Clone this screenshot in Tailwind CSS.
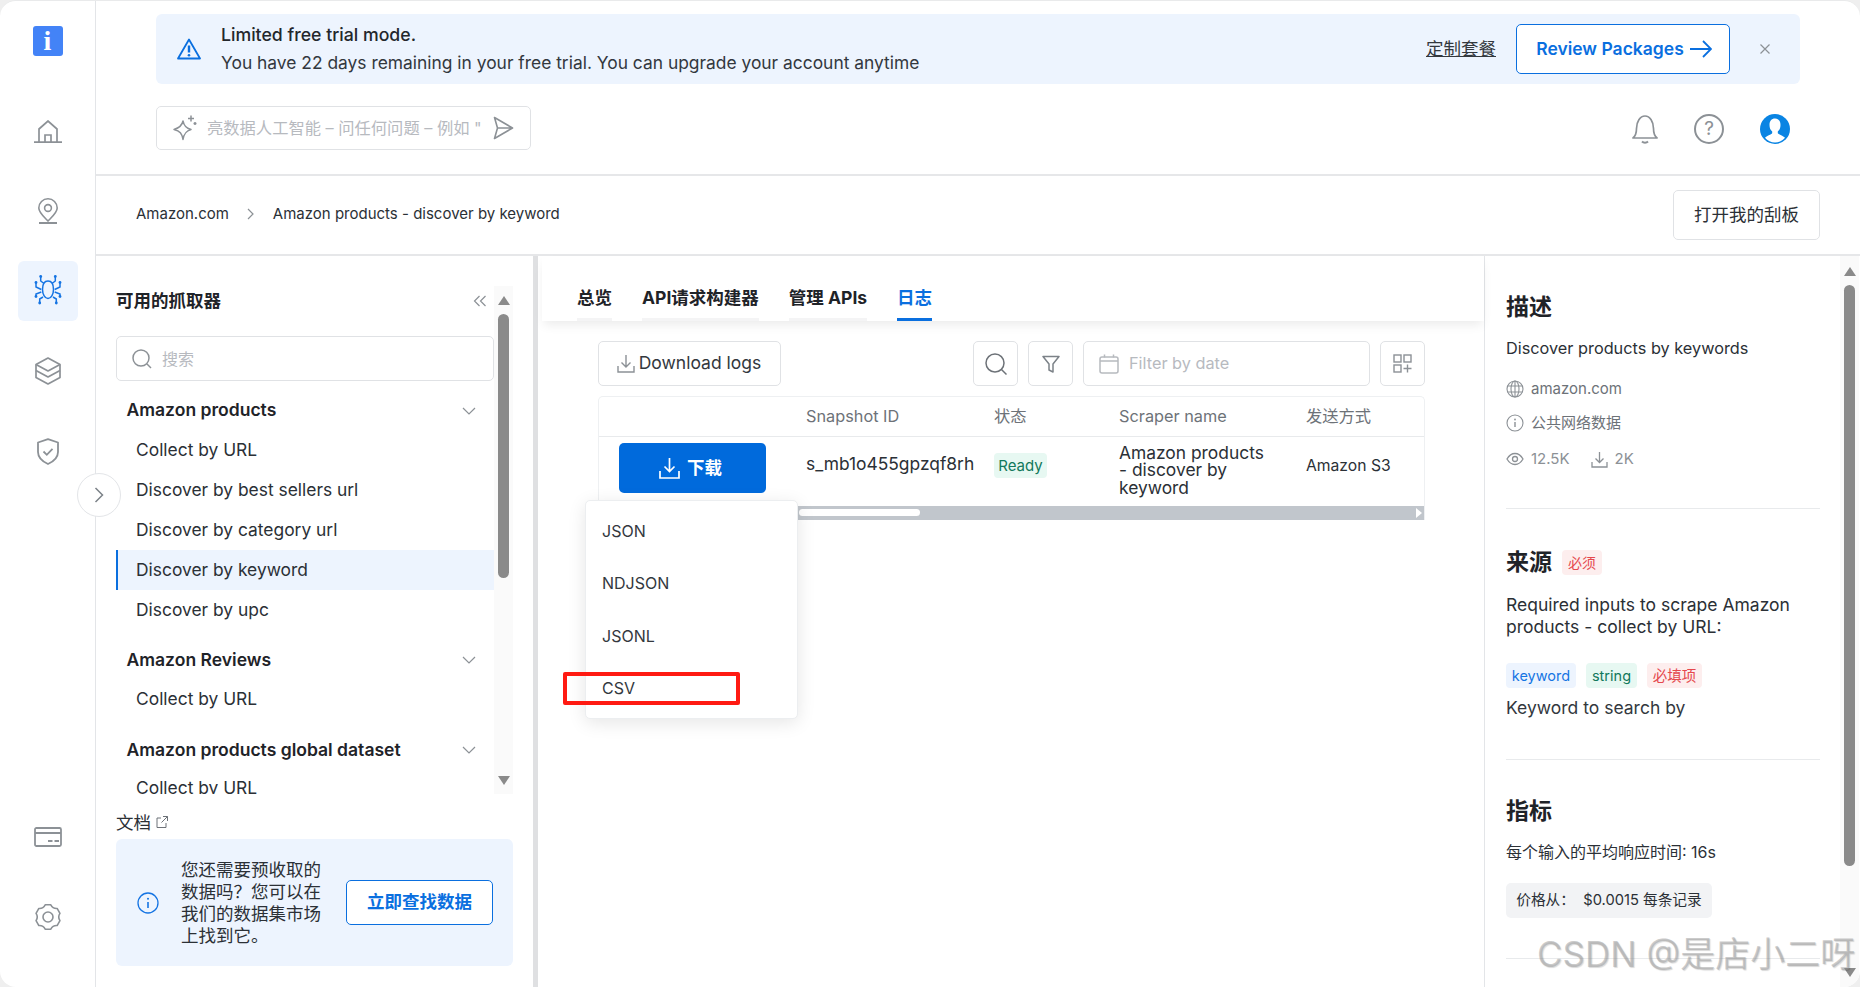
<!DOCTYPE html>
<html lang="zh">
<head>
<meta charset="utf-8">
<script src="https://cdn.jsdelivr.net/npm/@tailwindcss/browser@4"></script>
<title>Logs</title>
</head>
<body class="m-0 bg-[#efefef]">
<div class="relative flex h-[987px] w-[1860px] overflow-hidden rounded-[16px] border-t border-[#e9eaeb] bg-white font-['Inter','Noto_Sans_CJK_SC',sans-serif] text-[#23272c]">

  <!-- Rail -->
  <aside class="flex h-full w-[96px] shrink-0 flex-col items-center border-r border-[#e3e5e8] pt-[25px] text-[#8c9196]">
    <div class="flex h-[30px] w-[30px] items-center justify-center rounded-[3px] bg-[#4383f7] font-['Liberation_Serif',serif] text-[28px] font-bold leading-none text-white">i</div>
    <nav class="mt-[45px] flex flex-col gap-5">
      <div class="flex h-[60px] w-[60px] items-center justify-center">
        <svg width="28" height="23" viewBox="0 0 28 23" fill="none" stroke="currentColor" stroke-width="1.700"><path d="M5 22V9L14 1l9 8v13"/><path d="M11 22v-7h6v7"/><path d="M0 22.200h28"/></svg>
      </div>
      <div class="flex h-[60px] w-[60px] items-center justify-center">
        <svg width="20" height="26" viewBox="0 0 20 26" fill="none" stroke="currentColor" stroke-width="1.600"><path d="M10 23C5 18 .8 14.500.8 10a9.200 9.200 0 0 1 18.400 0c0 4.500-4.200 8-9.200 13Z"/><circle cx="10" cy="10" r="3.400"/><path d="M1 25h18" stroke-width="2"/></svg>
      </div>
      <div class="flex h-[60px] w-[60px] items-center justify-center rounded-[6px] bg-[#edf4fe] text-[#1574e3]">
        <svg width="30" height="32" viewBox="0 0 30 32" fill="none" stroke="currentColor" stroke-width="1.500">
          <path d="M15 6c-3.500 0-5.500 3.500-5.500 8.500S12 23.500 15 23.500s5.500-4 5.500-9S18.500 6 15 6Z"/>
          <path d="M7.700 1.500V6L11 8.500M22.300 1.500V6L19 8.500M3 7.500V12l5.300 2.500M27 7.500V12l-5.300 2.500M3 21.500V19l5.300-2M27 21.500V19l-5.300-2M6.700 28v-4l3.300-2M23.300 28v-4l-3.300-2"/>
          <g fill="currentColor" stroke="none"><circle cx="7.700" cy="1.500" r="1.400"/><circle cx="22.300" cy="1.500" r="1.400"/><circle cx="3" cy="7.500" r="1.400"/><circle cx="27" cy="7.500" r="1.400"/><circle cx="3" cy="21.500" r="1.400"/><circle cx="27" cy="21.500" r="1.400"/><circle cx="6.700" cy="28" r="1.400"/><circle cx="23.300" cy="28" r="1.400"/></g>
        </svg>
      </div>
      <div class="flex h-[60px] w-[60px] items-center justify-center">
        <svg width="26" height="28" viewBox="0 0 26 28" fill="none" stroke="currentColor" stroke-width="1.700" stroke-linejoin="round"><path d="M13 1 25 7.500v13L13 27 1 20.500v-13Z"/><path d="M1 7.500 13 14 25 7.500"/><path d="M1 13.500 13 20l12-6.500"/></svg>
      </div>
      <div class="flex h-[60px] w-[60px] items-center justify-center">
        <svg width="22" height="27" viewBox="0 0 22 27" fill="none" stroke="currentColor" stroke-width="1.800"><path d="M11 1.200 21 4.500V14c0 5.500-4.500 9.500-10 12C5.500 23.500 1 19.500 1 14V4.500Z" stroke-linejoin="round"/><path d="m6.500 13.500 3.300 3.300 5.700-6"/></svg>
      </div>
    </nav>
    <div class="mt-auto mb-[40px] flex flex-col gap-5">
      <div class="flex h-[60px] w-[60px] items-center justify-center">
        <svg width="28" height="20" viewBox="0 0 28 20" fill="none" stroke="currentColor" stroke-width="1.800"><rect x="1" y="1" width="26" height="18" rx="1.500"/><path d="M1 6h26"/><path d="M14 14h4.500M20.500 14H25" stroke-width="2"/></svg>
      </div>
      <div class="flex h-[60px] w-[60px] items-center justify-center">
        <svg width="26" height="26" viewBox="0 0 26 26" fill="none" stroke="currentColor" stroke-width="1.600" stroke-linejoin="round"><path d="M10.190.82 15.810.82Q17.750 4.770 22.140 4.470L24.950 9.350Q22.500 13 24.950 16.650L22.140 21.530Q17.750 21.230 15.810 25.180L10.190 25.180Q8.250 21.230 3.860 21.530L1.050 16.650Q3.500 13 1.050 9.350L3.860 4.470Q8.250 4.770 10.190.82Z"/><circle cx="13" cy="13" r="5"/></svg>
      </div>
    </div>
  </aside>

  <!-- Toggle -->
  <button class="absolute left-[77px] top-[472px] flex h-[44px] w-[44px] items-center justify-center rounded-full border border-[#e3e5e8] bg-white text-[#7c8288]">
    <svg width="10" height="16" viewBox="0 0 10 16" fill="none" stroke="currentColor" stroke-width="1.500"><path d="m1.500 1 7 7-7 7"/></svg>
  </button>

  <div class="flex min-w-0 flex-1 flex-col">
    <!-- Header -->
    <header class="h-[175px] shrink-0 border-b-2 border-[#e6e7e9] pl-[60px] pt-[13px]">
      <div class="flex h-[70px] w-[1644px] items-center rounded-[6px] bg-[#edf4fe] pl-[21px] pr-[29px]">
        <svg width="24" height="22" viewBox="0 0 24 22" fill="none" stroke="#0a6fdf" stroke-width="1.800"><path d="M12 1.500 23 20.500H1Z" stroke-linejoin="round"/><path d="M12 7.500v7" stroke-width="2.400"/><circle cx="12" cy="17.300" r="1.300" fill="#0a6fdf" stroke="none"/></svg>
        <div class="ml-[20px] flex-1">
          <p class="text-[17.700px] font-medium leading-[28px] text-[#23272c]">Limited free trial mode.</p>
          <p class="text-[17.400px] leading-[28px] text-[#33383e]">You have 22 days remaining in your free trial. You can upgrade your account anytime</p>
        </div>
        <a class="text-[17.500px] text-[#33383e] underline">定制套餐</a>
        <button class="ml-[20px] flex h-[50px] w-[214px] shrink-0 items-center justify-center gap-[6px] rounded-[5px] border border-[#0a6fdf] bg-white pl-[2px] text-[17.500px] font-semibold text-[#0a6fdf]">Review Packages
          <svg width="22" height="20" viewBox="0 0 22 20" fill="none" stroke="currentColor" stroke-width="1.800"><path d="M0 10h21M13 2l8 8-8 8"/></svg>
        </button>
        <svg class="ml-[29px] shrink-0" width="12" height="12" viewBox="0 0 12 12" fill="none" stroke="#8c9196" stroke-width="1.200"><path d="m1.500 1.500 9 9M10.500 1.500l-9 9"/></svg>
      </div>
      <div class="mt-[22px] flex items-center justify-between pr-[70px]">
        <div class="flex h-[44px] w-[375px] items-center rounded-[5px] border border-[#e0e2e5] pl-[16px]">
          <svg width="24" height="26" viewBox="0 0 24 26" fill="none" stroke="#8c9196" stroke-width="1.500"><path d="M10 6c1 5 3 7 8 8.500-5 1.500-7 4-8 10-1-6-3-8.500-9-10C6 13 9 11 10 6Z" stroke-linejoin="round"/><path d="M18 0.500v6M15 3.500h6M22 7v3M20.500 8.500h3"/></svg>
          <span class="ml-[10px] text-[16.300px] text-[#b7babf]">亮数据人工智能 – 问任何问题 – 例如 "</span>
          <svg class="ml-[11px]" width="21" height="24" viewBox="0 0 21 24" fill="none" stroke="#8c9196" stroke-width="1.600"><path d="M1.500 1.500 19.500 12 1.500 22.500 4.500 12ZM4.500 12h15" stroke-linejoin="round"/></svg>
        </div>
        <div class="mt-[1px] flex items-center">
          <svg width="26" height="30" viewBox="0 0 26 30" fill="none" stroke="#8c9196" stroke-width="1.700"><path d="M1 24c3-2.500 3.500-5 3.500-9.500C4.500 8 8 2 13 2s8.500 6 8.500 12.500c0 4.500.5 7 3.500 9.500Z" stroke-linejoin="round"/><path d="M10 27.500c1.500 1.500 4.500 1.500 6 0" stroke-width="2"/></svg>
          <div class="ml-[36px] flex h-[30px] w-[30px] items-center justify-center rounded-full border-2 border-[#8c9196] text-[19px] leading-none text-[#8c9196]">?</div>
          <div class="ml-[36px] h-[30px] w-[30px] rounded-full bg-[#0984e3]">
            <svg width="30" height="30" viewBox="0 0 30 30"><path d="M15 4.500c3.500 0 5.500 2.500 5.500 6.500 0 3-1 5.200-2.700 6.500v1.500c0 1.200 5 2.300 7.200 4.800a13 13 0 0 1-20 0c2.200-2.500 7.200-3.600 7.200-4.800v-1.500C10.500 16.200 9.500 14 9.500 11c0-4 2-6.500 5.500-6.500Z" fill="#fff"/></svg>
          </div>
        </div>
      </div>
    </header>

    <!-- Breadcrumb -->
    <div class="flex h-[80px] shrink-0 items-center border-b-2 border-[#e6e7e9] pl-[40px] pr-[40px]">
      <span class="-mt-[2px] text-[15px] text-[#2b3036]">Amazon.com</span>
      <svg class="ml-[18px] -mt-[2px]" width="8" height="12" viewBox="0 0 8 12" fill="none" stroke="#8c9196" stroke-width="1.200"><path d="m1 1 5 5-5 5"/></svg>
      <span class="-mt-[2px] ml-[18px] text-[15px] text-[#2b3036]">Amazon products - discover by keyword</span>
      <button class="ml-auto h-[50px] w-[147px] rounded-[5px] border border-[#e0e2e5] text-[17.500px] text-[#2b3036]">打开我的刮板</button>
    </div>

    <div class="flex min-h-0 flex-1">
      <!-- Sidebar -->
      <section class="h-full w-[437px] shrink-0 pl-[20px] pt-[30px]">
        <div class="flex h-[508px] w-[397px]">
          <div class="h-full w-[378px] overflow-hidden">
            <div class="flex h-[30px] items-center justify-between pr-[7px]">
              <h2 class="text-[17.500px] font-bold text-[#1f2328]">可用的抓取器</h2>
              <svg width="14" height="12" viewBox="0 0 14 12" fill="none" stroke="#8c9196" stroke-width="1.200"><path d="M6.500 1 1.500 6l5 5M12.500 1l-5 5 5 5"/></svg>
            </div>
            <div class="mt-[20px] flex h-[45px] items-center rounded-[5px] border border-[#e0e2e5] pl-[15px]">
              <svg width="20" height="20" viewBox="0 0 20 20" fill="none" stroke="#8c9196" stroke-width="1.500"><circle cx="9" cy="9" r="8"/><path d="m15 15 4 4"/></svg>
              <span class="ml-[10px] text-[16px] text-[#b7babf]">搜索</span>
            </div>
            <div class="mt-[10px] flex h-[39px] items-center justify-between pl-[10.500px] pr-[18px] text-[17.550px] font-semibold text-[#1f2328]">Amazon products
              <svg width="14" height="8" viewBox="0 0 14 8" fill="none" stroke="#8c9196" stroke-width="1.200"><path d="m1 1 6 6 6-6"/></svg>
            </div>
            <ul class="text-[17.400px] text-[#2b3036]">
              <li class="flex h-[40.100px] items-center pl-[20px]">Collect by URL</li>
              <li class="flex h-[40.100px] items-center pl-[20px]">Discover by best sellers url</li>
              <li class="flex h-[40.100px] items-center pl-[20px]">Discover by category url</li>
              <li class="flex h-[40.100px] items-center border-l-2 border-[#0a6fdf] bg-[#edf4fe] pl-[18px]">Discover by keyword</li>
              <li class="flex h-[40.100px] items-center pl-[20px]">Discover by upc</li>
            </ul>
            <div class="mt-[10px] flex h-[40px] items-center justify-between pl-[10.500px] pr-[18px] text-[17.550px] font-semibold text-[#1f2328]">Amazon Reviews
              <svg width="14" height="8" viewBox="0 0 14 8" fill="none" stroke="#8c9196" stroke-width="1.200"><path d="m1 1 6 6 6-6"/></svg>
            </div>
            <div class="flex h-[38px] items-center pl-[20px] text-[17.400px] text-[#2b3036]">Collect by URL</div>
            <div class="mt-[12px] flex h-[40px] items-center justify-between pl-[10.500px] pr-[18px] text-[17.550px] font-semibold text-[#1f2328]">Amazon products global dataset
              <svg width="14" height="8" viewBox="0 0 14 8" fill="none" stroke="#8c9196" stroke-width="1.200"><path d="m1 1 6 6 6-6"/></svg>
            </div>
            <div class="flex h-[36px] items-center pl-[20px] text-[17.400px] text-[#2b3036]">Collect by URL</div>
          </div>
          <div class="flex h-full w-[19px] flex-col items-center bg-[#fafafa]">
            <svg class="mt-[10px] shrink-0" width="12" height="9" viewBox="0 0 12 9"><path d="M6 0l6 9H0Z" fill="#8a8a8a"/></svg>
            <div class="mt-[9px] h-[264px] w-[11px] rounded-full bg-[#8a8a8a]"></div>
            <svg class="mt-auto mb-[9px] shrink-0" width="12" height="9" viewBox="0 0 12 9"><path d="M6 9 12 0H0Z" fill="#8a8a8a"/></svg>
          </div>
        </div>
        <div class="mt-[17px] flex h-[24px] items-center text-[17.500px] text-[#2b3036]">文档
          <svg class="ml-[5px] -mt-[2px]" width="12" height="12" viewBox="0 0 12 12" fill="none" stroke="#6d7278" stroke-width="1"><path d="M5 2H1v9.500h9V7M7 .5h4.500V5M11.500.5 5.500 6.500"/></svg>
        </div>
        <div class="mt-[4px] flex h-[127px] w-[397px] items-center rounded-[6px] bg-[#edf4fe] pl-[21px]">
          <svg class="shrink-0" width="22" height="22" viewBox="0 0 22 22" fill="none" stroke="#1574e3" stroke-width="1.300"><circle cx="11" cy="11" r="10"/><path d="M11 10v6" stroke-width="1.600"/><circle cx="11" cy="6.800" r="1" fill="#1574e3" stroke="none"/></svg>
          <p class="ml-[22px] w-[144px] shrink-0 text-[17.500px] leading-[22px] text-[#2b3036]">您还需要预收取的数据吗？您可以在我们的数据集市场上找到它。</p>
          <button class="ml-[21px] h-[45px] w-[147px] shrink-0 rounded-[5px] border border-[#0a6fdf] bg-white text-[17.500px] font-bold text-[#0a6fdf]">立即查找数据</button>
        </div>
      </section>

      <div class="h-full w-[5px] shrink-0 bg-[#dfe0e2]"></div>

      <!-- Main content -->
      <main class="relative h-full w-[947px] shrink-0 border-r border-[#e3e5e8]">
        <div class="ml-[4px] flex h-[65px] items-end gap-[30px] pl-[35px] shadow-[0_6px_10px_-2px_rgba(0,0,0,0.08)]">
          <div class="flex h-[65px] items-center border-b-[3px] border-[#f4f4f5] pt-[23px] text-[17.500px] font-bold text-[#1f2328]">总览</div>
          <div class="flex h-[65px] items-center border-b-[3px] border-[#f4f4f5] pt-[23px] text-[17.500px] font-bold text-[#1f2328]">API请求构建器</div>
          <div class="flex h-[65px] items-center border-b-[3px] border-[#f4f4f5] pt-[23px] text-[17.500px] font-bold text-[#1f2328]">管理 APIs</div>
          <div class="flex h-[65px] items-center border-b-[3px] border-[#0a6fdf] pt-[23px] text-[17.500px] font-bold text-[#0a6fdf]">日志</div>
        </div>
        <div class="mt-[20px] ml-[60px] flex h-[45px] w-[827px] items-stretch">
          <button class="flex w-[183px] items-center justify-center gap-[4px] rounded-[5px] border border-[#e0e2e5] pr-[1px] text-[17.500px] text-[#33383e]">
            <svg width="18" height="19" viewBox="0 0 18 19" fill="none" stroke="#8c9196" stroke-width="1.400"><path d="M9 1v12M4.500 8.500 9 13l4.500-4.500M1 12v6h16v-6"/></svg>Download logs</button>
          <button class="ml-auto flex w-[45px] items-center justify-center rounded-[5px] border border-[#e0e2e5]">
            <svg width="22" height="22" viewBox="0 0 22 22" fill="none" stroke="#6d7278" stroke-width="1.500"><circle cx="10" cy="10" r="9"/><path d="m16.500 16.500 5 5"/></svg>
          </button>
          <button class="ml-[10px] flex w-[45px] items-center justify-center rounded-[5px] border border-[#e0e2e5]">
            <svg width="18" height="18" viewBox="0 0 18 18" fill="none" stroke="#7c8288" stroke-width="1.500"><path d="M1 1.500h16L11 9v8l-4-2V9Z" stroke-linejoin="round"/></svg>
          </button>
          <div class="ml-[10px] flex w-[287px] items-center rounded-[5px] border border-[#e0e2e5] pl-[15px]">
            <svg width="20" height="20" viewBox="0 0 20 20" fill="none" stroke="#b7babf" stroke-width="1.500"><rect x="1" y="3" width="18" height="16" rx="2"/><path d="M1 7h18M5.500 0.500v3M14.500 0.500v3"/></svg>
            <span class="ml-[10px] text-[16.300px] text-[#b7babf]">Filter by date</span>
          </div>
          <button class="ml-[10px] flex w-[45px] items-center justify-center rounded-[5px] border border-[#e0e2e5]">
            <svg width="19" height="19" viewBox="0 0 19 19" fill="none" stroke="#8c9196" stroke-width="1.400"><rect x="1" y="1" width="7" height="7"/><rect x="11" y="1" width="7" height="7"/><rect x="1" y="11" width="7" height="7"/><path d="M14.500 10.500v8M10.500 14.500h8"/></svg>
          </button>
        </div>
        <div class="relative ml-[60px] mt-[10px] w-[827px] rounded-t-[5px] border-x border-t border-[#eef0f2]">
          <div class="grid h-[40px] grid-cols-[207px_188px_125px_187px_1fr] items-center border-b border-[#e8eaec] text-[16.300px] text-[#6d7278]">
            <div></div><div>Snapshot ID</div><div>状态</div><div>Scraper name</div><div>发送方式</div>
          </div>
          <div class="grid h-[69px] grid-cols-[207px_188px_125px_187px_1fr] items-center text-[16px] text-[#2b3036]">
            <div class="h-full pl-[20px] pt-[6px]">
              <button class="flex h-[50px] w-[147px] items-center justify-center gap-[7px] rounded-[5px] bg-[#006adc] text-[17.500px] font-bold text-white">
                <svg class="-ml-[4px]" width="21" height="22" viewBox="0 0 21 22" fill="none" stroke="#fff" stroke-width="1.700"><path d="M10.500 1v13M5.500 9.500l5 5 5-5M1 14v7h19v-7"/></svg>下载</button>
            </div>
            <div class="-mt-[14px] whitespace-nowrap text-[17.400px]">s_mb1o455gpzqf8rh</div>
            <div class="-mt-[12px]"><span class="inline-flex h-[25px] w-[53px] items-center justify-center rounded-[4px] bg-[#e7f8f2] text-[15px] text-[#12795c]">Ready</span></div>
            <div class="-mt-[3px] w-[150px] text-[17.400px] leading-[17.500px]">Amazon products - discover by keyword</div>
            <div class="-mt-[12px] text-[15.700px]">Amazon S3</div>
          </div>
          <div class="relative h-[14px] bg-[#c1c6cc]">
            <div class="absolute left-[200px] top-[3px] h-[7px] w-[121px] rounded-full bg-white"></div>
            <svg class="absolute right-[2px] top-[2px]" width="6" height="10" viewBox="0 0 6 10"><path d="M0 0l6 5-6 5Z" fill="#fff"/></svg>
          </div>
          <!-- Dropdown -->
          <ul class="absolute left-[-14px] top-[103px] h-[219px] w-[213px] rounded-[5px] border border-[#eceef0] bg-white pl-[16px] pt-[4px] text-[16px] text-[#33383e] shadow-[0_4px_18px_rgba(0,0,0,0.10)]">
            <li class="flex h-[52.300px] items-center">JSON</li>
            <li class="flex h-[52.300px] items-center">NDJSON</li>
            <li class="flex h-[52.300px] items-center">JSONL</li>
            <li class="flex h-[52.300px] items-center">CSV</li>
          </ul>
          <div class="absolute left-[-36px] top-[275px] h-[33px] w-[177px] rounded-[2px] border-4 border-[#ff1a12]"></div>
        </div>
      </main>

      <!-- Right panel -->
      <aside class="flex h-full min-w-0 flex-1">
        <div class="w-[355px] shrink-0 pl-[21px] pr-[20px]">
          <h3 class="mt-[36px] flex h-[30px] items-center text-[23px] font-bold text-[#1f2328]">描述</h3>
          <p class="mt-[14px] h-[24px] text-[16.300px] leading-[24px] text-[#2b3036]">Discover products by keywords</p>
          <div class="mt-[17px] flex h-[24px] items-center text-[15px] text-[#6d7278]">
            <svg width="18" height="18" viewBox="0 0 18 18" fill="none" stroke="#8c9196" stroke-width="1.100"><circle cx="9" cy="9" r="8"/><ellipse cx="9" cy="9" rx="4" ry="8"/><path d="M1.500 6h15M1.500 12h15M9 1v16"/></svg>
            <span class="ml-[7px]">amazon.com</span>
          </div>
          <div class="mt-[10px] flex h-[24px] items-center text-[15px] text-[#6d7278]">
            <svg width="18" height="18" viewBox="0 0 18 18" fill="none" stroke="#8c9196" stroke-width="1.100"><circle cx="9" cy="9" r="8"/><path d="M9 8v5" stroke-width="1.400"/><circle cx="9" cy="5.500" r=".9" fill="#8c9196" stroke="none"/></svg>
            <span class="ml-[7px]">公共网络数据</span>
          </div>
          <div class="mt-[12px] flex h-[24px] items-center text-[15px] text-[#8c9196]">
            <svg width="18" height="14" viewBox="0 0 18 14" fill="none" stroke="#8c9196" stroke-width="1.300"><path d="M1 7c2-3.500 4.800-5.500 8-5.500S15 3.500 17 7c-2 3.500-4.800 5.500-8 5.500S3 10.500 1 7Z"/><circle cx="9" cy="7" r="2.500"/></svg>
            <span class="ml-[7px]">12.5K</span>
            <svg class="ml-[21px]" width="17" height="17" viewBox="0 0 17 17" fill="none" stroke="#8c9196" stroke-width="1.300"><path d="M8.500 1v10M4.500 7.500l4 4 4-4M1 11v5h15v-5"/></svg>
            <span class="ml-[7px]">2K</span>
          </div>
          <hr class="mt-[37px] border-[#e8eaec]">
          <div class="mt-[38px] flex h-[30px] items-center">
            <h3 class="text-[23px] font-bold text-[#1f2328]">来源</h3>
            <span class="ml-[10px] flex h-[25px] w-[40px] items-center justify-center rounded-[4px] bg-[#fdeeee] text-[14px] text-[#e5484d]">必须</span>
          </div>
          <p class="mt-[17px] text-[17.500px] leading-[22px] text-[#2b3036]">Required inputs to scrape Amazon products - collect by URL:</p>
          <div class="mt-[25px] flex h-[25px] gap-[10px] text-[14.500px]">
            <span class="flex w-[70px] items-center justify-center rounded-[4px] bg-[#edf4fe] text-[#1574e3]">keyword</span>
            <span class="flex w-[51px] items-center justify-center rounded-[4px] bg-[#e7f8f2] text-[#12795c]">string</span>
            <span class="flex w-[55px] items-center justify-center rounded-[4px] bg-[#fdeeee] text-[#e5484d]">必填项</span>
          </div>
          <p class="mt-[8px] h-[24px] text-[17.500px] leading-[24px] text-[#33383e]">Keyword to search by</p>
          <hr class="mt-[39px] border-[#e8eaec]">
          <h3 class="mt-[36px] flex h-[30px] items-center text-[23px] font-bold text-[#1f2328]">指标</h3>
          <p class="mt-[14px] h-[24px] text-[16px] leading-[24px] text-[#2b3036]">每个输入的平均响应时间: 16s</p>
          <div class="mt-[19px] flex h-[35px] w-[206px] items-center justify-center rounded-[5px] bg-[#f2f3f5] text-[14.700px] text-[#2b3036]">价格从：&nbsp;&nbsp;$0.0015 每条记录</div>
          <hr class="mt-[40px] border-[#e8eaec]">
        </div>
        <div class="flex h-full w-[19px] flex-col items-center bg-[#fafafa]">
          <svg class="mt-[11px] shrink-0" width="12" height="9" viewBox="0 0 12 9"><path d="M6 0l6 9H0Z" fill="#8a8a8a"/></svg>
          <div class="mt-[9px] h-[581px] w-[11px] rounded-full bg-[#8a8a8a]"></div>
          <svg class="mt-auto mb-[10px] shrink-0" width="12" height="9" viewBox="0 0 12 9"><path d="M6 9 12 0H0Z" fill="#8a8a8a"/></svg>
        </div>
      </aside>
    </div>
  </div>

  <!-- Watermark -->
  <div class="pointer-events-none absolute left-[1537px] top-[933px] whitespace-nowrap text-[35px] leading-[40px] text-[#9a9a9a]/50 [text-shadow:1px_1px_1px_rgba(0,0,0,0.15)]">CSDN @是店小二呀</div>
</div>
</body>
</html>
